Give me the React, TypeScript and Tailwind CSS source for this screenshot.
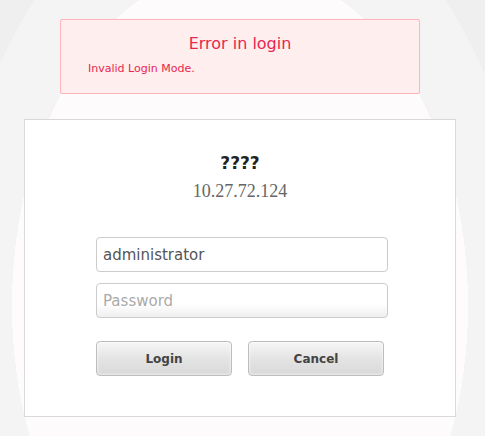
export default function App() {
  return (
    <div className="flex h-[436px] w-[485px] flex-col items-center overflow-hidden bg-[radial-gradient(ellipse_228px_340px_at_240px_305px,#fefbfd_100%,#f5f4f5_100%,#f5f4f5_127%,#efefef_127%)] pr-[5px] font-['DejaVu_Sans',sans-serif]">
      <div className="mt-[19px] flex h-[75px] w-[360px] flex-col rounded-[2px] border border-[#ffb3ba] bg-[#ffeeee]">
        <h2 className="mt-[14px] text-center text-[16px] leading-[20px] text-[#e8264f]">
          Error in login
        </h2>
        <p className="mt-[8px] pl-[27px] text-[11px] leading-[14px] text-[#e8264f]">
          Invalid Login Mode.
        </p>
      </div>

      <div className="mt-[25px] flex h-[298px] w-[432px] flex-col items-center border border-[#d9d9d9] bg-white">
        <div className="mt-[32px] text-[17px] font-bold leading-[22px] text-[#222]">
          ????
        </div>
        <div className="mt-[6px] font-['Liberation_Serif',serif] text-[18px] leading-[22px] text-[#666]">
          10.27.72.124
        </div>

        <div className="mt-[35px] ml-[4px] flex w-[292px] flex-col gap-[11px]">
          <input
            type="text"
            defaultValue="administrator"
            className="h-[35px] w-full rounded-[4px] border border-[#cccccc] bg-white px-[6px] text-[15px] text-[#555] outline-none"
          />
          <input
            type="password"
            placeholder="Password"
            className="h-[35px] w-full rounded-[4px] border border-[#cccccc] bg-[linear-gradient(#ffffff,#ffffff_60%,#efefef)] px-[6px] text-[15px] text-[#555] outline-none placeholder:text-[#aaaaaa]"
          />
        </div>

        <div className="mt-[23px] ml-[4px] flex w-[292px] gap-[16px]">
          <button className="h-[35px] w-[136px] rounded-[4px] border border-[#bdbdbd] bg-[linear-gradient(#f6f6f6,#e4e4e4_50%,#d9d9d9)] text-[12px] font-bold text-[#444] shadow-[inset_0_0_3px_#ffffff]">
            Login
          </button>
          <button className="h-[35px] w-[136px] rounded-[4px] border border-[#bdbdbd] bg-[linear-gradient(#f6f6f6,#e4e4e4_50%,#d9d9d9)] text-[12px] font-bold text-[#444] shadow-[inset_0_0_3px_#ffffff]">
            Cancel
          </button>
        </div>
      </div>
    </div>
  );
}
